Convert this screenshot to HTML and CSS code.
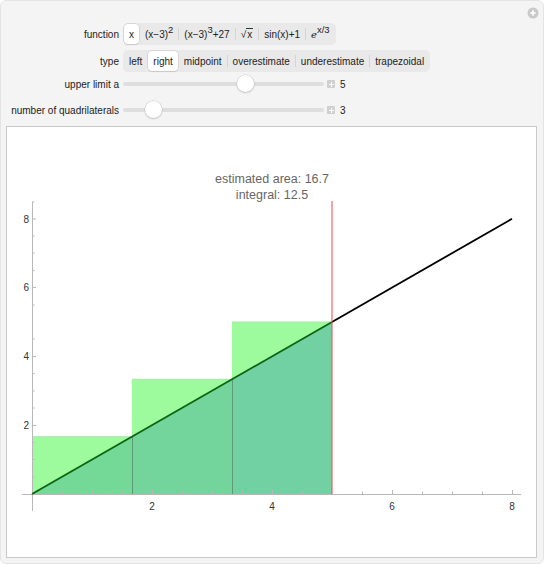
FILE: index.html
```html
<!DOCTYPE html>
<html>
<head>
<meta charset="utf-8">
<link rel="stylesheet" href="styles.css">
</head>
<body>
<div class="panel">
  <svg class="addbtn" width="12" height="12" viewBox="0 0 12 12"><circle cx="6" cy="6" r="5.5" fill="#c9c9c9"/><path d="M6 3.2v5.6M3.2 6h5.6" stroke="#fff" stroke-width="1.6"/></svg>
  <div class="controls">
    <div class="row row-func">
      <div class="label">function</div>
      <div class="seg">
        <span class="item sel">x</span>
        <span class="item">(x−3)<sup>2</sup></span>
        <span class="item sep">(x−3)<sup>3</sup>+27</span>
        <span class="item sep"><span class="rad">√<span class="radx">x</span></span></span>
        <span class="item sep">sin(x)+1</span>
        <span class="item sep"><span class="ee">e</span><sup>x/3</sup></span>
      </div>
    </div>
    <div class="row row-type">
      <div class="label">type</div>
      <div class="seg">
        <span class="item">left</span>
        <span class="item sel">right</span>
        <span class="item">midpoint</span>
        <span class="item sep">overestimate</span>
        <span class="item sep">underestimate</span>
        <span class="item sep">trapezoidal</span>
      </div>
    </div>
    <div class="row row-s1">
      <div class="label">upper limit a</div>
      <div class="slider"><div class="track"></div><div class="thumb" style="left:114px"></div></div>
      <span class="plus"></span><span class="val">5</span>
    </div>
    <div class="row row-s2">
      <div class="label">number of quadrilaterals</div>
      <div class="slider"><div class="track"></div><div class="thumb" style="left:22px"></div></div>
      <span class="plus"></span><span class="val">3</span>
    </div>
  </div>
  <div class="plot">
    <svg width="529" height="430" viewBox="7 128 529 430">
      <text class="title" x="272" y="184">estimated area: 16.7</text>
      <text class="title" x="272" y="200">integral: 12.5</text>
      <!-- rectangles -->
      <rect x="32" y="437.7" width="100" height="57.3" fill="#9dfa9d"/>
      <rect x="132" y="380.3" width="100" height="114.7" fill="#9dfa9d"/>
      <rect x="232" y="323" width="100" height="172" fill="#9dfa9d"/>
      <polygon points="32,495 132,437.7 132,495" fill="#74d996"/>
      <polygon points="132,495 132,437.7 232,380.3 232,495" fill="#73d59c"/>
      <polygon points="232,495 232,380.3 332,323 332,495" fill="#72d1a2"/>
      <path d="M32 437.7H132M132 380.3H232M232 323H332" stroke="#b9dcb9" stroke-width="1"/>
      <path d="M132.5 437.7V495M232.5 380.3V495" stroke="#5c9a78" stroke-width="1"/>
      <!-- axes -->
      <g stroke="#b8b8b8" stroke-width="1">
        <path d="M22 495.5H521M32.5 203V512"/>
        <path d="M152.5 495V491M272.5 495V491M392.5 495V491M512.5 495V491"/>
        <path d="M62.5 495V492.5M92.5 495V492.5M122.5 495V492.5M182.5 495V492.5M212.5 495V492.5M242.5 495V492.5M302.5 495V492.5M362.5 495V492.5M422.5 495V492.5M452.5 495V492.5M482.5 495V492.5"/>
        <path d="M32 426.5H36M32 357.5H36M32 288.5H36M32 220H36"/>
        <path d="M32 478H34.5M32 460.5H34.5M32 443.5H34.5M32 409H34.5M32 392H34.5M32 374.5H34.5M32 340H34.5M32 306H34.5M32 271.5H34.5M32 254H34.5M32 237H34.5M32 203H34.5"/>
      </g>
      <!-- curve -->
      <path d="M32 495L332 323" stroke="#0b650b" stroke-width="1.8"/>
      <path d="M332 323L512 219.8" stroke="#000" stroke-width="1.8"/>
      <path d="M332 202V495" stroke="#ec4a4e" stroke-width="1"/>
      <!-- labels -->
      <g class="tick">
        <text x="152" y="510.5">2</text>
        <text x="272" y="510.5">4</text>
        <text x="392" y="510.5">6</text>
        <text x="512" y="510.5">8</text>
      </g>
      <g class="tick ylab">
        <text x="29" y="430">2</text>
        <text x="29" y="361">4</text>
        <text x="29" y="292">6</text>
        <text x="29" y="223.5">8</text>
      </g>
    </svg>
  </div>
</div>
</body>
</html>
```
FILE: styles.css
```css
html, body {
  margin: 0;
  padding: 0;
  background: #ffffff;
}
body {
  font-family: "Liberation Sans", Arial, sans-serif;
  font-size: 10px;
  color: #222;
}
.panel {
  position: relative;
  box-sizing: border-box;
  width: 544px;
  height: 564px;
  background: #f4f4f4;
  border: 1px solid #e4e4e4;
  border-radius: 6px;
  padding: 22px 5px 0 5px;
}
.addbtn {
  position: absolute;
  right: 4px;
  top: 6px;
}
.controls {
  display: flex;
  flex-direction: column;
}
.row {
  display: flex;
  align-items: center;
}
.label {
  width: 113px;
  text-align: right;
  margin-right: 4px;
  white-space: nowrap;
}
.row-func { height: 22px; }
.row-type { height: 22px; margin-top: 5px; }
.row-s1 { height: 20px; margin-top: 2px; }
.row-s2 { height: 20px; margin-top: 6px; }
.seg {
  display: flex;
  align-items: center;
  height: 22px;
  box-sizing: border-box;
  padding: 1px;
  background: #e9e9e9;
  border-radius: 5px;
}
.item {
  position: relative;
  display: flex;
  align-items: center;
  height: 20px;
  box-sizing: border-box;
  padding: 0 5px;
  margin-left: 1px;
  white-space: nowrap;
  border-radius: 4px;
}
.item:first-child { margin-left: 0; }
.item.sep::before {
  content: "";
  position: absolute;
  left: -1px;
  top: 4px;
  height: 12px;
  width: 1px;
  background: #d4d4d4;
}
.item.sel {
  background: #ffffff;
  box-shadow: 0 0 0 0.5px #c4c4c4, 0 1px 1px rgba(0,0,0,0.12);
}
.item sup {
  font-size: 9.5px;
  position: relative;
  top: -4px;
  vertical-align: baseline;
  line-height: 0;
}
.rad { font-size: 10px; }
.radx { border-top: 1px solid #333; padding: 0 1px; }
.ee {
  font-family: "DejaVu Serif", "Liberation Serif", serif;
  font-style: italic;
  font-size: 10px;
}
.slider {
  position: relative;
  width: 201px;
  height: 20px;
}
.track {
  position: absolute;
  left: 0;
  right: 0;
  top: 8px;
  height: 4px;
  border-radius: 2px;
  background: #dedede;
}
.thumb {
  position: absolute;
  top: 1px;
  width: 17px;
  height: 17px;
  border-radius: 50%;
  background: #ffffff;
  box-shadow: 0 0 0 0.5px #c8c8c8, 0 1px 2px rgba(0,0,0,0.2);
}
.plus {
  position: relative;
  width: 8px;
  height: 8px;
  margin-left: 3px;
  background: #cfcfcf;
  border-radius: 1px;
}
.plus::before, .plus::after {
  content: "";
  position: absolute;
  background: #fff;
}
.plus::before { left: 1.5px; right: 1.5px; top: 3.5px; height: 1px; }
.plus::after { top: 1.5px; bottom: 1.5px; left: 3.5px; width: 1px; }
.val {
  margin-left: 5px;
}
.plot {
  margin-top: 6px;
  width: 531px;
  height: 432px;
  box-sizing: border-box;
  border: 1px solid #c9c9c9;
  background: #ffffff;
}
.plot svg { display: block; }
.title {
  font-family: "Liberation Sans", Arial, sans-serif;
  font-size: 12.5px;
  fill: #666;
  text-anchor: middle;
}
.tick text {
  font-family: "Liberation Sans", Arial, sans-serif;
  font-size: 10px;
  fill: #333;
  text-anchor: middle;
}
.ylab text { text-anchor: end; }
```
